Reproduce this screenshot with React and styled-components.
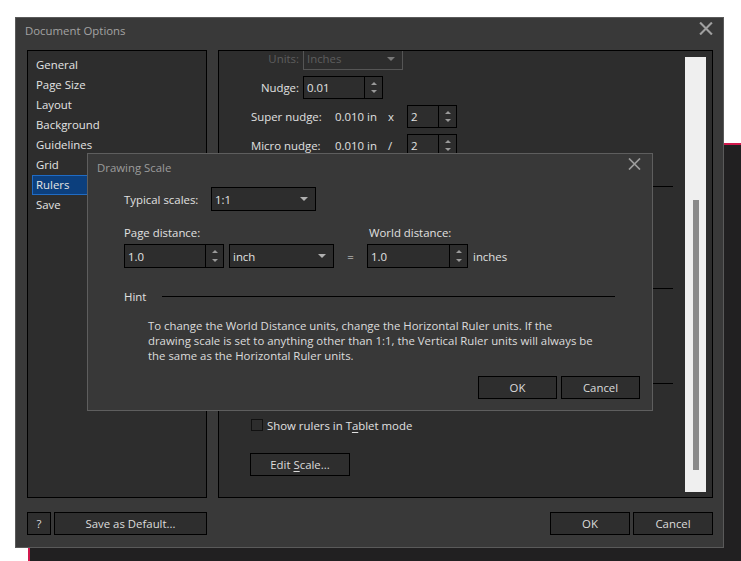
import { createGlobalStyle, styled } from 'styled-components';

const GlobalStyle = createGlobalStyle`
  body {
    margin: 0;
    background: #ffffff;
    font-family: "Open Sans", "Noto Sans", sans-serif;
    font-size: 11.4px;
    color: #e2e2e2;
  }
  * { box-sizing: border-box; }
`;

const pages = ['General', 'Page Size', 'Layout', 'Background', 'Guidelines', 'Grid', 'Rulers', 'Save'];

const CloseIcon = ({ size = 13, color = '#9a9a9a', width = 1.8 }) => (
  <svg width={size} height={size - 1} viewBox="0 0 13 12">
    <path d="M1 0.5 L12 11.5 M12 0.5 L1 11.5" stroke={color} strokeWidth={width} fill="none" />
  </svg>
);

const SpinBox = ({ value, width }) => (
  <Spin $w={width}>
    <SpinText>{value}</SpinText>
    <SpinButtons>
      <Arrow $up />
      <Arrow />
    </SpinButtons>
  </Spin>
);

const Dropdown = ({ value, width, disabled }) => (
  <Select $w={width} $disabled={disabled}>
    {value}
    <DropArrow $disabled={disabled} />
  </Select>
);

const App = () => {
  return (
    <>
      <GlobalStyle />
      <Desktop>
        <BackWindow />
        <MainDialog>
          <TitleBar>
            <TitleText>Document Options</TitleText>
            <CloseBox $shift={-4}>
              <CloseIcon size={14} color="#a0a0a0" width={2} />
            </CloseBox>
          </TitleBar>
          <DialogBody>
            <ListPanel>
              {pages.map((p) => (
                <ListItem key={p} $selected={p === 'Rulers'}>
                  {p}
                </ListItem>
              ))}
            </ListPanel>
            <OptionsPanel>
              <PanelContent>
                <FieldRow $mt={-4}>
                  <FieldLabel $disabled>Units:</FieldLabel>
                  <Dropdown value="Inches" width={100} disabled />
                </FieldRow>
                <FieldRow $mt={6}>
                  <FieldLabel>Nudge:</FieldLabel>
                  <SpinBox value="0.01" width={80} />
                </FieldRow>
                <FieldRow $mt={6}>
                  <NudgeLabel>Super nudge:</NudgeLabel>
                  <NudgeValue>0.010 in</NudgeValue>
                  <NudgeOp>x</NudgeOp>
                  <SpinBox value="2" width={50} />
                </FieldRow>
                <FieldRow $mt={6}>
                  <NudgeLabel>Micro nudge:</NudgeLabel>
                  <NudgeValue>0.010 in</NudgeValue>
                  <NudgeOp>/</NudgeOp>
                  <SpinBox value="2" width={50} />
                </FieldRow>
                {/* group separators; their captions sit under the Drawing Scale window */}
                <GroupHeader $mt={21}>
                  <GroupLine />
                </GroupHeader>
                <GroupHeader $mt={86}>
                  <GroupLine />
                </GroupHeader>
                <GroupHeader $mt={79}>
                  <GroupLine />
                </GroupHeader>
                <CheckRow $mt={1}>
                  <CheckBox />
                </CheckRow>
                <CheckRow>
                  <CheckBox />
                  <span>
                    Show rulers in T<u>a</u>blet mode
                  </span>
                </CheckRow>
                <Button $w={100} $mt={17} $ml={-1}>
                  <span>
                    Edit <u>S</u>cale...
                  </span>
                </Button>
              </PanelContent>
              <ScrollTrack>
                <ScrollThumb />
              </ScrollTrack>
            </OptionsPanel>
          </DialogBody>
          <Footer>
            <ButtonGroup>
              <Button $w={24}>?</Button>
              <Button $w={153}>Save as Default...</Button>
            </ButtonGroup>
            <ButtonGroup>
              <Button $w={80}>OK</Button>
              <Button $w={80}>Cancel</Button>
            </ButtonGroup>
          </Footer>
        </MainDialog>

        <ScaleDialog>
          <ModalTitleBar>
            <ModalTitle>Drawing Scale</ModalTitle>
            <CloseBox $shift={-6}>
              <CloseIcon size={13} color="#9c9c9c" width={1.7} />
            </CloseBox>
          </ModalTitleBar>
          <ModalBody>
            <ScaleRow>
              <ScaleLabel>Typical scales:</ScaleLabel>
              <Dropdown value="1:1" width={105} />
            </ScaleRow>
            <DistanceLabels>
              <DistanceLabel $w={245}>Page distance:</DistanceLabel>
              <DistanceLabel>World distance:</DistanceLabel>
            </DistanceLabels>
            <DistanceRow>
              <SpinBox value="1.0" width={100} />
              <Dropdown value="inch" width={105} />
              <Equals>=</Equals>
              <SpinBox value="1.0" width={101} />
              <UnitText>inches</UnitText>
            </DistanceRow>
            <HintHeader>
              <span>Hint</span>
              <GroupLine />
            </HintHeader>
            <HintText>
              To change the World Distance units, change the Horizontal Ruler units. If the
              <br />
              drawing scale is set to anything other than 1:1, the Vertical Ruler units will always be
              <br />
              the same as the Horizontal Ruler units.
            </HintText>
            <ModalButtons>
              <Button $w={79}>OK</Button>
              <Button $w={79}>Cancel</Button>
            </ModalButtons>
          </ModalBody>
        </ScaleDialog>
      </Desktop>
    </>
  );
};

const Desktop = styled.div`
  position: relative;
  width: 741px;
  height: 561px;
  overflow: hidden;
  background: #ffffff;
`;

// window sitting behind the dialogs
const BackWindow = styled.div`
  position: absolute;
  left: 28px;
  top: 143px;
  right: -20px;
  bottom: -20px;
  background: #212021;
  border-top: 2px solid #d2194d;
  border-left: 2px solid #d2194d;
`;

const MainDialog = styled.div`
  position: absolute;
  left: 15px;
  top: 17px;
  width: 709px;
  height: 531px;
  background: #393939;
  border: 1px solid #5a5a5a;
  display: flex;
  flex-direction: column;
`;

const TitleBar = styled.div`
  height: 32px;
  padding: 0 10px 7px 9px;
  display: flex;
  align-items: center;
  justify-content: space-between;
`;

const TitleText = styled.div`
  color: #a3a3a3;
`;

const CloseBox = styled.div`
  display: flex;
  margin-top: ${({ $shift }) => $shift}px;
`;

const DialogBody = styled.div`
  height: 448px;
  display: flex;
  gap: 11px;
  padding: 0 10px 0 11px;
`;

const ListPanel = styled.div`
  width: 180px;
  background: #2d2d2d;
  border: 1px solid #000000;
  padding: 4px 4px;
  display: flex;
  flex-direction: column;
`;

const ListItem = styled.div`
  height: 20px;
  line-height: 18px;
  padding-left: 3px;
  color: #e4e4e4;
  border: 1px solid ${({ $selected }) => ($selected ? '#1f6bc4' : 'transparent')};
  background: ${({ $selected }) => ($selected ? '#0c3f7d' : 'transparent')};
`;

const OptionsPanel = styled.div`
  flex: 1;
  background: #2d2d2d;
  border: 1px solid #000000;
  display: flex;
  overflow: hidden;
`;

const PanelContent = styled.div`
  flex: 1;
  padding: 0 12px 0 32px;
  display: flex;
  flex-direction: column;
  align-items: flex-start;
`;

const ScrollTrack = styled.div`
  width: 21px;
  margin: 6px 6px 5px 0;
  background: #efefef;
  padding: 143px 0 0 8px;
`;

const ScrollThumb = styled.div`
  width: 6px;
  height: 270px;
  background: #8a8a8a;
`;

const FieldRow = styled.div`
  height: 23px;
  margin-top: ${({ $mt = 0 }) => $mt}px;
  display: flex;
  align-items: center;
`;

const FieldLabel = styled.div`
  width: 48px;
  margin-right: 4px;
  text-align: right;
  color: ${({ $disabled }) => ($disabled ? '#5e5e5e' : '#e0e0e0')};
`;

const NudgeLabel = styled.div`
  width: 84px;
  color: #e0e0e0;
`;

const NudgeValue = styled.div`
  width: 53px;
  color: #e0e0e0;
`;

const NudgeOp = styled.div`
  width: 19px;
  color: #e0e0e0;
`;

const Spin = styled.div`
  width: ${({ $w }) => $w}px;
  height: 100%;
  min-height: 23px;
  border: 1px solid #000000;
  background: #2d2d2d;
  display: flex;
`;

const SpinText = styled.div`
  flex: 1;
  padding-left: 3px;
  display: flex;
  align-items: center;
  color: #e2e2e2;
`;

const SpinButtons = styled.div`
  width: 18px;
  border-left: 1px solid #000000;
  display: flex;
  flex-direction: column;
  align-items: center;
  justify-content: space-around;
  padding: 2px 0;
`;

const Arrow = styled.div`
  width: 0;
  height: 0;
  border-left: 3px solid transparent;
  border-right: 3px solid transparent;
  ${({ $up }) => ($up ? 'border-bottom: 3px solid #9a9a9a;' : 'border-top: 3px solid #9a9a9a;')}
`;

const Select = styled.div`
  width: ${({ $w }) => $w}px;
  height: 100%;
  min-height: 23px;
  border: 1px solid ${({ $disabled }) => ($disabled ? '#555555' : '#000000')};
  background: #2d2d2d;
  padding: 0 7px 0 3px;
  display: flex;
  align-items: center;
  justify-content: space-between;
  color: ${({ $disabled }) => ($disabled ? '#5e5e5e' : '#e2e2e2')};
`;

const DropArrow = styled.div`
  width: 0;
  height: 0;
  border-left: 4px solid transparent;
  border-right: 4px solid transparent;
  border-top: 4px solid ${({ $disabled }) => ($disabled ? '#777777' : '#b0b0b0')};
`;

const GroupHeader = styled.div`
  align-self: stretch;
  height: 16px;
  margin-top: ${({ $mt = 0 }) => $mt}px;
  display: flex;
  align-items: center;
  gap: 13px;
  color: #e0e0e0;
`;

const GroupLine = styled.div`
  flex: 1;
  height: 1px;
  background: #000000;
`;

const CheckRow = styled.div`
  height: 22px;
  margin-top: ${({ $mt = 0 }) => $mt}px;
  display: flex;
  align-items: center;
  gap: 4px;
  color: #e0e0e0;

  u {
    text-decoration-thickness: 1px;
    text-underline-offset: 2px;
  }
`;

const CheckBox = styled.div`
  width: 12px;
  height: 12px;
  border: 1px solid #111111;
  background: #2d2d2d;
`;

const Button = styled.div`
  width: ${({ $w }) => $w}px;
  height: 23px;
  margin-top: ${({ $mt = 0 }) => $mt}px;
  margin-left: ${({ $ml = 0 }) => $ml}px;
  flex-shrink: 0;
  background: #2e2e2e;
  border: 1px solid #000000;
  color: #dcdcdc;
  display: flex;
  align-items: center;
  justify-content: center;

  u {
    text-decoration-thickness: 1px;
    text-underline-offset: 2px;
  }
`;

const Footer = styled.div`
  margin-top: 14px;
  padding: 0 10px 0 11px;
  display: flex;
  justify-content: space-between;
`;

const ButtonGroup = styled.div`
  display: flex;
  gap: 3px;
`;

const ScaleDialog = styled.div`
  position: absolute;
  left: 87px;
  top: 153px;
  width: 566px;
  height: 258px;
  background: #383838;
  border: 1px solid #5e5e5e;
  display: flex;
  flex-direction: column;
`;

const ModalTitleBar = styled.div`
  height: 27px;
  padding: 0 11px 1px 9px;
  display: flex;
  align-items: center;
  justify-content: space-between;
`;

const ModalTitle = styled.div`
  color: #9c9c9c;
`;

const ModalBody = styled.div`
  flex: 1;
  padding: 0 12px 11px 36px;
  display: flex;
  flex-direction: column;
`;

const ScaleRow = styled.div`
  height: 24px;
  margin-top: 6px;
  display: flex;
  align-items: center;
`;

const ScaleLabel = styled.div`
  width: 87px;
  color: #e0e0e0;
`;

const DistanceLabels = styled.div`
  height: 14px;
  margin-top: 14px;
  display: flex;
  align-items: center;
  color: #e0e0e0;
`;

const DistanceLabel = styled.div`
  width: ${({ $w }) => ($w ? `${$w}px` : 'auto')};
`;

const DistanceRow = styled.div`
  height: 24px;
  margin-top: 5px;
  display: flex;
  align-items: stretch;
  gap: 5px;
`;

const Equals = styled.div`
  width: 23px;
  display: flex;
  align-items: center;
  justify-content: center;
  color: #e0e0e0;
`;

const UnitText = styled.div`
  display: flex;
  align-items: center;
  color: #e0e0e0;
`;

const HintHeader = styled(GroupHeader)`
  margin-top: 20px;
  margin-right: 25px;
  gap: 16px;
`;

const HintText = styled.p`
  margin: 14px 0 0 24px;
  line-height: 15px;
  color: #dcdcdc;
`;

const ModalButtons = styled.div`
  margin-top: auto;
  display: flex;
  justify-content: flex-end;
  gap: 4px;
`;

export default App;
